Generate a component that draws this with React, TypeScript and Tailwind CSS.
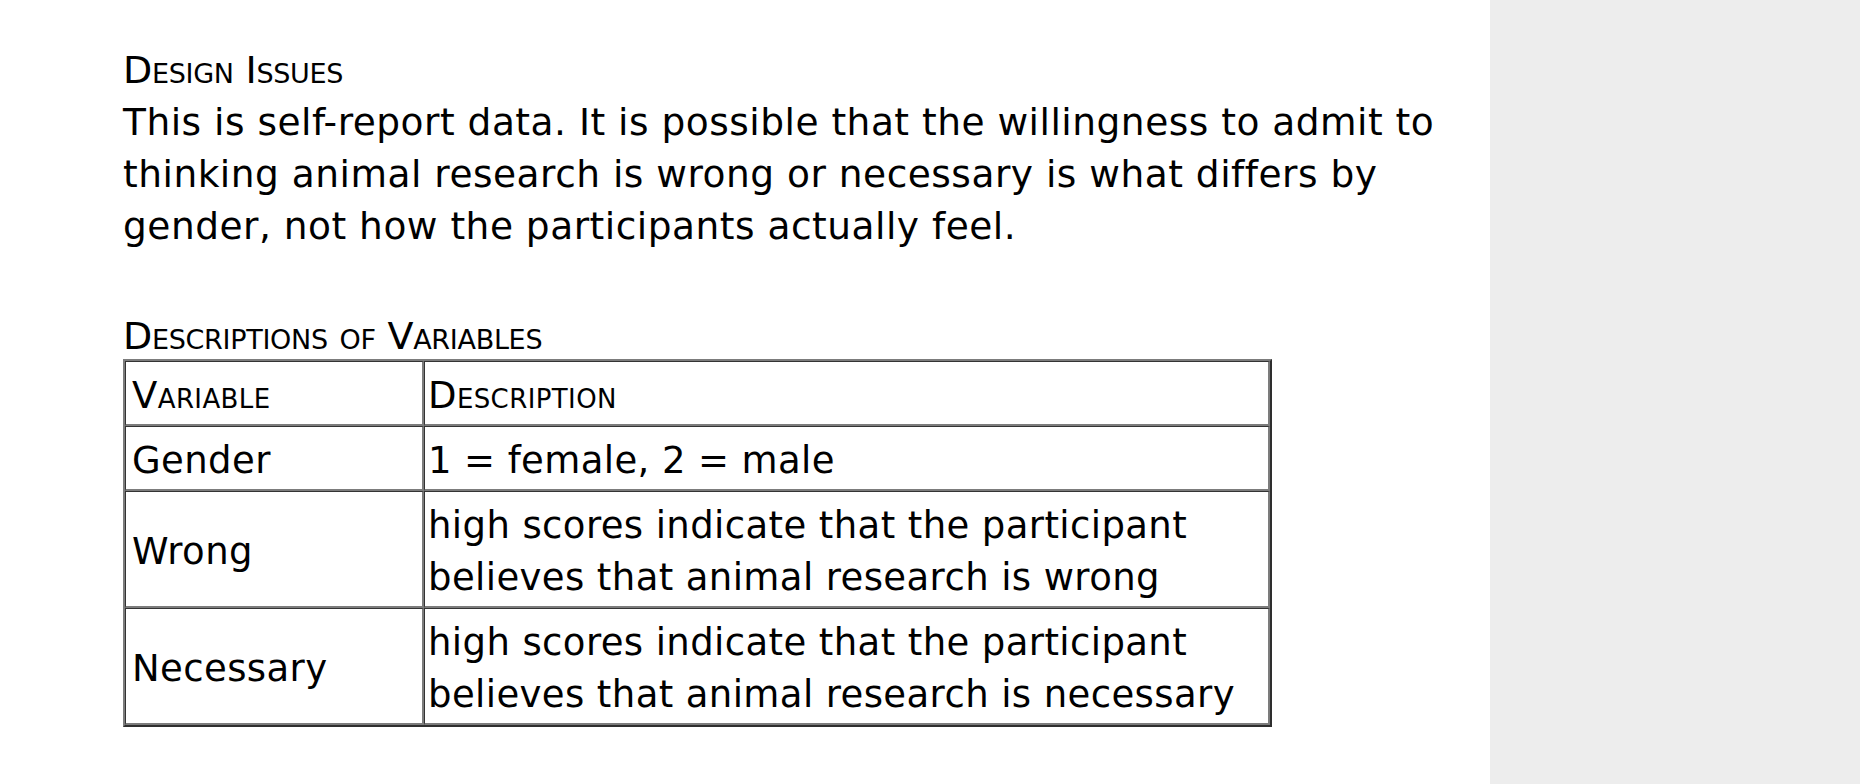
const rows = [
  { name: "Gender", desc: "1 = female, 2 = male" },
  { name: "Wrong", desc: "high scores indicate that the participant believes that animal research is wrong" },
  { name: "Necessary", desc: "high scores indicate that the participant believes that animal research is necessary" },
];

const cell =
  "border-t border-l border-t-[#333333] border-l-[#333333] border-r-2 border-b-2 border-r-[#7c7c7c] border-b-[#7c7c7c] pr-[2px] pt-[8px] pb-[2px] align-middle text-left font-normal";

export default function App() {
  return (
    <div className="flex min-h-screen bg-white text-black" style={{ fontFamily: '"DejaVu Sans", "Liberation Sans", sans-serif' }}>
      <main className="w-[1490px] shrink-0 pl-[123px] pr-[30px] pt-[44px]">
        <h3 className="text-[38px] leading-[52px] font-normal tracking-[-0.3px] [font-variant-caps:small-caps]">Design Issues</h3>
        <p className="text-[37.5px] leading-[52px] tracking-[0.5px]">
          This is self-report data. It is possible that the willingness to admit to thinking animal research is wrong or
          necessary is what differs by gender, not how the participants actually feel.
        </p>

        <h3 className="mt-[61px] text-[38px] leading-[46px] font-normal tracking-[-0.3px] [font-variant-caps:small-caps]">
          Descriptions of Variables
        </h3>
        <table className="w-[1149px] border-separate border-spacing-0 border-2 border-t-[#7c7c7c] border-l-[#7c7c7c] border-r-[#2e2e2e] border-b-[#2e2e2e] text-[37px] leading-[52px] tracking-[0.4px]">
          <thead>
            <tr>
              <th className={`${cell} w-[299px] pl-[6px] [font-variant-caps:small-caps]`}>Variable</th>
              <th className={`${cell} pl-[3px] [font-variant-caps:small-caps]`}>Description</th>
            </tr>
          </thead>
          <tbody>
            {rows.map((r) => (
              <tr key={r.name}>
                <td className={`${cell} pl-[6px]`}>{r.name}</td>
                <td className={`${cell} pl-[3px]`}>{r.desc}</td>
              </tr>
            ))}
          </tbody>
        </table>
      </main>
      <aside className="flex-1 bg-[#ededed]" />
    </div>
  );
}
